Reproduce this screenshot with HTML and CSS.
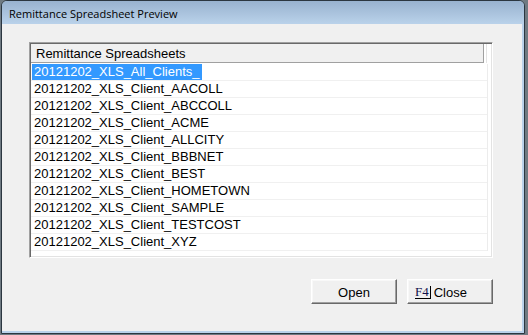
FILE: index.html
```html
<!DOCTYPE html>
<html>
<head>
<meta charset="utf-8">
<link rel="stylesheet" href="styles.css">
</head>
<body>
<div class="window">
  <div class="titlebar">Remittance Spreadsheet Preview</div>
  <div class="client">
    <div class="listbox">
      <div class="header">
        <div class="col">Remittance Spreadsheets</div>
        <div class="filler"></div>
      </div>
      <div class="rows">
        <div class="row"><span class="cell selected">20121202_XLS_All_Clients_</span></div>
        <div class="row"><span class="cell">20121202_XLS_Client_AACOLL</span></div>
        <div class="row"><span class="cell">20121202_XLS_Client_ABCCOLL</span></div>
        <div class="row"><span class="cell">20121202_XLS_Client_ACME</span></div>
        <div class="row"><span class="cell">20121202_XLS_Client_ALLCITY</span></div>
        <div class="row"><span class="cell">20121202_XLS_Client_BBBNET</span></div>
        <div class="row"><span class="cell">20121202_XLS_Client_BEST</span></div>
        <div class="row"><span class="cell">20121202_XLS_Client_HOMETOWN</span></div>
        <div class="row"><span class="cell">20121202_XLS_Client_SAMPLE</span></div>
        <div class="row"><span class="cell">20121202_XLS_Client_TESTCOST</span></div>
        <div class="row"><span class="cell">20121202_XLS_Client_XYZ</span></div>
      </div>
    </div>
    <div class="buttons">
      <div class="btn">Open</div>
      <div class="btn btn-left"><span class="key">F4</span><span>Close</span></div>
    </div>
  </div>
</div>
</body>
</html>
```
FILE: styles.css
```css
html, body {
  margin: 0;
  padding: 0;
}
body {
  background: #6f7a82;
  width: 528px;
  height: 335px;
  overflow: hidden;
}
.window {
  box-sizing: border-box;
  margin-left: 1px;
  width: 524px;
  height: 334px;
  border: 1px solid #2b3640;
  border-radius: 6px 6px 0 0;
  display: flex;
  flex-direction: column;
  overflow: hidden;
  background: #b9d1ea;
}
.titlebar {
  height: 23px;
  flex: none;
  background: linear-gradient(#98b2cf, #bad2ea);
  font-family: "Open Sans", sans-serif;
  font-size: 11px;
  line-height: 25px;
  color: #000;
  padding-left: 7px;
}
.client {
  flex: 1;
  background: #f0f0f0;
  margin: 0 2px 2px 0;
  padding: 18px 29px 0 27px;
  display: flex;
  flex-direction: column;
  font-family: "Liberation Sans", Arial, sans-serif;
  font-size: 13px;
}
.listbox {
  box-sizing: border-box;
  height: 216px;
  border: 1px solid;
  border-color: #a0a0a0 #ffffff #ffffff #a0a0a0;
  box-shadow: inset 1px 1px 0 #696969, inset -1px -1px 0 #e3e3e3;
  background: #fff;
  padding: 1px 1px 1px 1px;
}
.header {
  display: flex;
  height: 19px;
}
.header .col {
  box-sizing: border-box;
  width: 453px;
  background: #f0f0f0;
  border-right: 1px solid #a0a0a0;
  border-bottom: 1px solid #a0a0a0;
  padding-left: 5px;
  line-height: 19px;
  color: #000;
}
.header .filler {
  flex: 1;
  border-left: 1px solid #e3e3e3;
  margin-left: 2px;
}
.rows {
  margin-top: 1px;
  width: 456px;
  border-right: 1px solid #ececec;
}
.row {
  height: 16px;
  border-bottom: 1px solid #f0f0f0;
  line-height: 16px;
  color: #000;
}
.cell {
  display: inline-block;
  padding: 0 2px;
  margin-left: 1px;
}
.selected {
  background: #3399ff;
  color: #fff;
}
.buttons {
  display: flex;
  justify-content: flex-end;
  gap: 10px;
  margin-top: 21px;
}
.btn {
  box-sizing: border-box;
  width: 86px;
  height: 25px;
  border: 1px solid;
  border-color: #ffffff #696969 #696969 #ffffff;
  box-shadow: inset -1px -1px 0 #a0a0a0, inset 1px 1px 0 #f8f8f8;
  background: #f0f0f0;
  display: flex;
  align-items: center;
  justify-content: center;
  color: #000;
  padding-top: 1px;
}
.btn-left {
  justify-content: flex-start;
  padding-left: 7px;
  gap: 3px;
}
.key {
  font-family: "Liberation Serif", "Times New Roman", serif;
  font-size: 13px;
  color: #10104a;
  border-right: 1px solid #000;
  border-bottom: 1px solid #000;
  line-height: 12px;
  padding: 0 1px 0 0;
}
```
